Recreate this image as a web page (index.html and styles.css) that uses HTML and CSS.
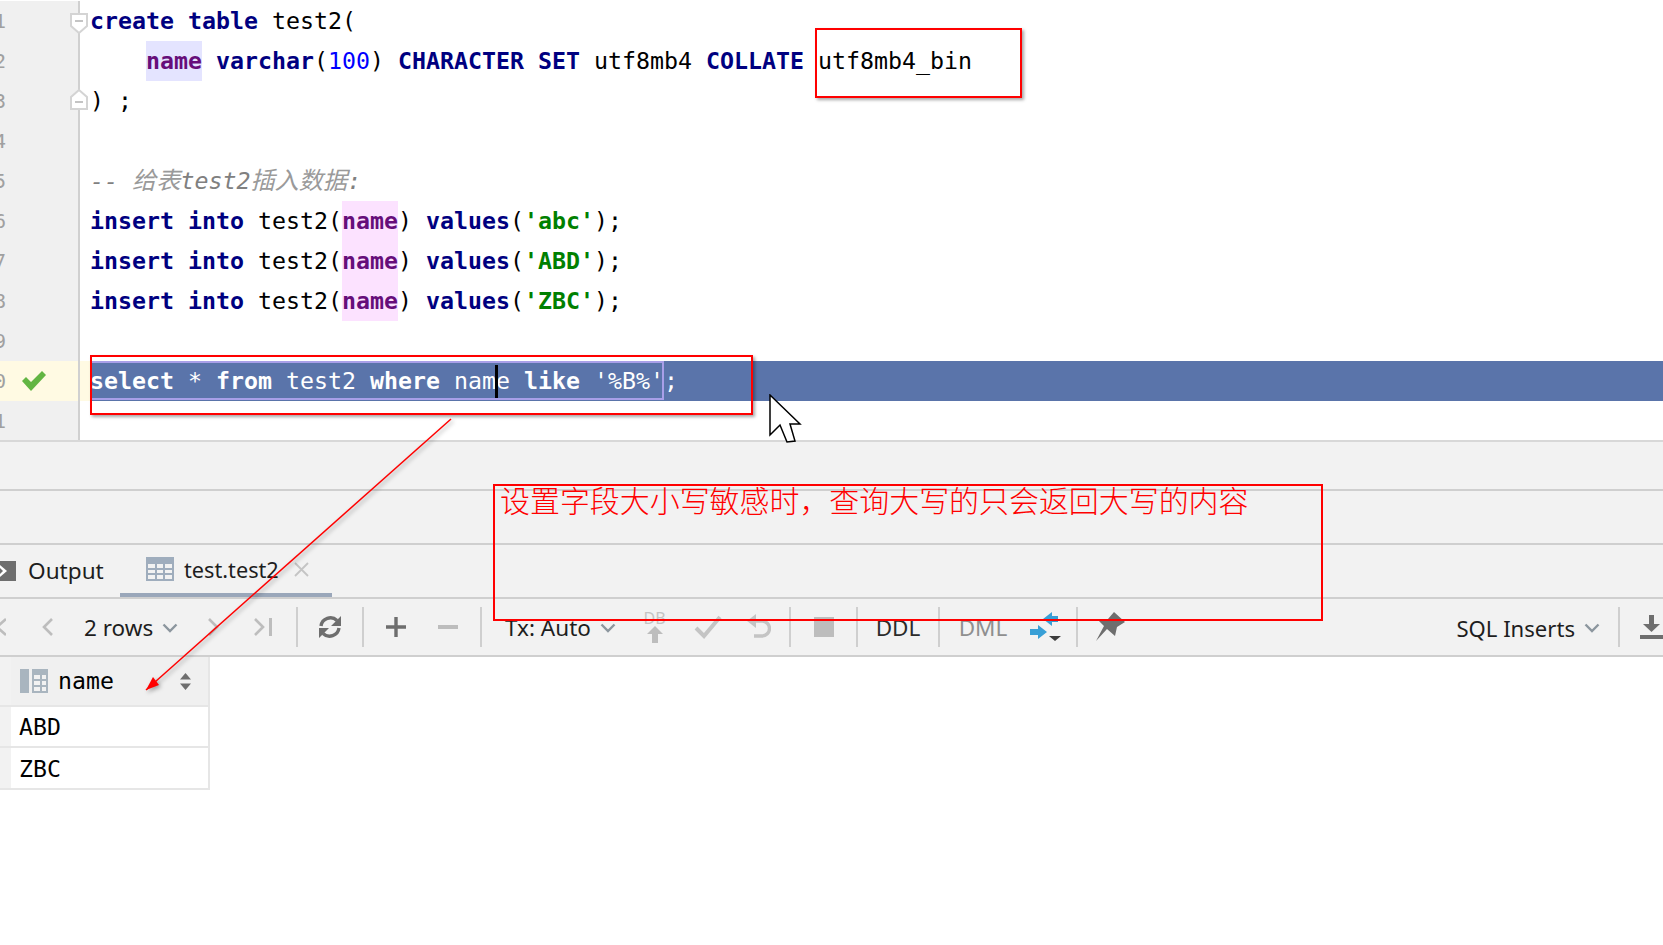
FILE: index.html
```html
<!DOCTYPE html>
<html lang="zh">
<head>
<meta charset="utf-8">
<title>test2</title>
<link rel="stylesheet" href="styles.css">
</head>
<body>
<div class="canvas">
  <section class="editor">
    <div class="line"><div class="gutter"><span class="num">1</span><svg class="fold" width="18" height="21" viewBox="0 0 18 21"><path d="M1 1H17V13L9 20L1 13Z" fill="#fff" stroke="#d4d4d4" stroke-width="2"/><path d="M5 8H13" stroke="#c4c4c4" stroke-width="2"/></svg></div><div class="code"><b>create table</b> test2(</div></div>
    <div class="line"><div class="gutter"><span class="num">2</span></div><div class="code">    <b class="ident hl-blue">name</b> <b>varchar</b>(<span class="n">100</span>) <b>CHARACTER SET</b> utf8mb4 <b>COLLATE</b> utf8mb4_bin</div></div>
    <div class="line"><div class="gutter"><span class="num">3</span><svg class="fold fold-end" width="18" height="21" viewBox="0 0 18 21"><path d="M1 20H17V8L9 1L1 8Z" fill="#fff" stroke="#d4d4d4" stroke-width="2"/><path d="M5 13H13" stroke="#c4c4c4" stroke-width="2"/></svg></div><div class="code">) ;</div></div>
    <div class="line"><div class="gutter"><span class="num">4</span></div><div class="code"></div></div>
    <div class="line"><div class="gutter"><span class="num">5</span></div><div class="code"><i class="c">-- <span class="cjk">给表</span>test2<span class="cjk">插入数据</span>:</i></div></div>
    <div class="line"><div class="gutter"><span class="num">6</span></div><div class="code"><b>insert into</b> test2(<b class="ident hl-pink">name</b>) <b>values</b>(<b class="s">'abc'</b>);</div></div>
    <div class="line"><div class="gutter"><span class="num">7</span></div><div class="code"><b>insert into</b> test2(<b class="ident hl-pink">name</b>) <b>values</b>(<b class="s">'ABD'</b>);</div></div>
    <div class="line"><div class="gutter"><span class="num">8</span></div><div class="code"><b>insert into</b> test2(<b class="ident hl-pink">name</b>) <b>values</b>(<b class="s">'ZBC'</b>);</div></div>
    <div class="line"><div class="gutter"><span class="num">9</span></div><div class="code"></div></div>
    <div class="line current"><div class="gutter"><span class="num">0</span><svg class="check" width="26" height="20" viewBox="0 0 26 20"><path d="M1 10L5 6L10 11L21 0L25 4L10 20Z" fill="#62b543"/></svg></div><div class="code"><span class="stmt"><b>select</b> * <b>from</b> test2 <b>where</b> name <b>like</b> '%B%'<span class="caret"></span></span>;</div></div>
    <div class="line"><div class="gutter"><span class="num">1</span></div><div class="code"></div></div>
  </section>

  <div class="gap"></div>
  <div class="gap"></div>

  <nav class="tabs">
    <div class="tab tab-output">
      <svg width="16" height="20" viewBox="0 0 16 20"><rect width="16" height="20" fill="#6e6e6e"/><path d="M0 4L7 10L0 16Z" fill="#fff"/><path d="M0 7L3 10L0 13Z" fill="#6e6e6e"/></svg>
      <span>Output</span>
    </div>
    <div class="tab tab-active">
      <svg width="28" height="24" viewBox="0 0 28 24"><rect width="28" height="24" fill="#9fadbd"/><path d="M2 7H26V22H2Z" fill="#f2f2f2"/><path d="M2 12H26M2 17H26M10 7V22M18 7V22" stroke="#9fadbd" stroke-width="2"/></svg>
      <span>test.test2</span>
      <svg class="close" width="15" height="15" viewBox="0 0 15 15"><path d="M1 1L14 14M14 1L1 14" stroke="#c4c4c4" stroke-width="1.800"/></svg>
    </div>
  </nav>

  <div class="toolbar">
    <div class="slot start"><svg width="6" height="18" viewBox="0 0 6 18"><path d="M6 1L-3 9L6 17" fill="none" stroke="#bdbdbd" stroke-width="2.600"/></svg></div>
    <div class="slot"><svg width="13" height="20" viewBox="0 0 13 20"><path d="M11 2L3 10L11 18" fill="none" stroke="#bdbdbd" stroke-width="2.600"/></svg></div>
    <div class="slot label rows"><span>2 rows</span><svg class="chev" width="16" height="10" viewBox="0 0 16 10"><path d="M1.500 1.500L8 8L14.500 1.500" fill="none" stroke="#8c969e" stroke-width="2.400"/></svg></div>
    <div class="slot"><svg width="13" height="20" viewBox="0 0 13 20"><path d="M2 2L10 10L2 18" fill="none" stroke="#bdbdbd" stroke-width="2.600"/></svg></div>
    <div class="slot"><svg width="20" height="20" viewBox="0 0 20 20"><path d="M2 2L10 10L2 18" fill="none" stroke="#bdbdbd" stroke-width="2.600"/><path d="M17.500 1V19" stroke="#bdbdbd" stroke-width="3"/></svg></div>
    <div class="sep"></div>
    <div class="slot"><svg width="26" height="26" viewBox="0 0 26 26"><path d="M4 12A9.500 9.500 0 0 1 20 6.500M22 14A9.500 9.500 0 0 1 6 19.500" fill="none" stroke="#6e6e6e" stroke-width="3.400"/><path d="M24 2V12H14ZM2 24V14H12Z" fill="#6e6e6e"/></svg></div>
    <div class="sep"></div>
    <div class="slot"><svg width="20" height="20" viewBox="0 0 20 20"><path d="M10 0V20M0 10H20" stroke="#6e6e6e" stroke-width="3.400"/></svg></div>
    <div class="slot"><svg width="20" height="4" viewBox="0 0 20 4"><rect width="20" height="4" fill="#bdbdbd"/></svg></div>
    <div class="sep"></div>
    <div class="slot label tx"><span>Tx: Auto</span><svg class="chev" width="16" height="10" viewBox="0 0 16 10"><path d="M1.500 1.500L8 8L14.500 1.500" fill="none" stroke="#8c969e" stroke-width="2.400"/></svg></div>
    <div class="slot db"><span class="db-text">DB</span><svg width="16" height="17" viewBox="0 0 16 17"><path d="M8 0L16 8H11V17H5V8H0Z" fill="#bdbdbd"/></svg></div>
    <div class="slot"><svg width="28" height="24" viewBox="0 0 28 24"><path d="M2 13L10 21L26 2" fill="none" stroke="#c4c4c4" stroke-width="4"/></svg></div>
    <div class="slot"><svg width="26" height="26" viewBox="0 0 26 26"><path d="M5 7H17A7 7 0 0 1 17 22H9" fill="none" stroke="#c4c4c4" stroke-width="3.400"/><path d="M11 0V14L2 7Z" fill="#c4c4c4"/></svg></div>
    <div class="sep"></div>
    <div class="slot"><svg width="20" height="20" viewBox="0 0 20 20"><rect width="20" height="20" fill="#bdbdbd"/></svg></div>
    <div class="sep"></div>
    <div class="slot text">DDL</div>
    <div class="sep"></div>
    <div class="slot text muted">DML</div>
    <div class="slot"><svg width="32" height="30" viewBox="0 0 32 30"><path d="M14 7L23 0V4H29V10H23V14Z" fill="#389fd6"/><path d="M18 20L9 27V23H1V17H9V13Z" fill="#389fd6"/><path d="M20 24H32L26 29Z" fill="#3c3c3c"/></svg></div>
    <div class="sep"></div>
    <div class="slot"><svg width="30" height="30" viewBox="0 0 30 30"><path d="M19 0L30 10L22 15L20 24L12 17L1 29L9 14L3 8L13 7Z" fill="#6e6e6e"/></svg></div>
    <div class="slot label sql"><span>SQL Inserts</span><svg class="chev" width="16" height="10" viewBox="0 0 16 10"><path d="M1.500 1.500L8 8L14.500 1.500" fill="none" stroke="#8c969e" stroke-width="2.400"/></svg></div>
    <div class="sep"></div>
    <div class="slot end"><svg width="23" height="24" viewBox="0 0 23 24"><path d="M9 0H14V9H20L11.500 17L3 9H9Z" fill="#6e6e6e"/><rect y="20" width="23" height="4" fill="#6e6e6e"/></svg></div>
  </div>

  <section class="grid">
    <div class="grid-row head">
      <div class="rownum"></div>
      <div class="cell">
        <svg width="28" height="24" viewBox="0 0 28 24"><rect width="9" height="24" fill="#a9b5bf"/><path d="M12 0H28V24H12Z" fill="#a9b5bf"/><path d="M14 6H20V10H14ZM22 6H26V10H22ZM14 12H20V16H14ZM22 12H26V16H22ZM14 18H20V22H14ZM22 18H26V22H22Z" fill="#f2f2f2"/></svg>
        <span class="col-name">name</span>
        <svg class="sort" width="11" height="17" viewBox="0 0 11 17"><path d="M5.500 0L11 6.500H0ZM5.500 17L0 10.500H11Z" fill="#6e6e6e"/></svg>
      </div>
    </div>
    <div class="grid-row"><div class="rownum"></div><div class="cell">ABD</div></div>
    <div class="grid-row"><div class="rownum"></div><div class="cell">ZBC</div></div>
  </section>

  <div class="note note-bin"></div>
  <div class="note note-stmt"></div>
  <div class="note note-main">设置字段大小写敏感时，查询大写的只会返回大写的内容</div>
  <svg class="arrow" width="320" height="285" viewBox="0 0 320 285">
    <path d="M311 4L6 275" stroke="#f00" stroke-width="1.500"/>
    <path d="M6 275L13 262L19 270Z" fill="#f00"/>
  </svg>
  <svg class="pointer" width="34" height="50" viewBox="0 0 34 50"><path d="M1 1L31 30H21L26 47L18 48L11 31L1 41Z" fill="#fff" stroke="#000" stroke-width="1.500"/></svg>
</div>
</body>
</html>
```

FILE: styles.css
```css
* { box-sizing: border-box; }
html, body { margin: 0; padding: 0; background: #fff; }
.canvas {
  position: relative;
  width: 1663px;
  height: 945px;
  overflow: hidden;
  font-family: "Noto Sans", "Noto Sans CJK SC", sans-serif;
  color: #1e1e1e;
}

/* editor */
.editor {
  padding-top: 1px;
  height: 440px;
  overflow: hidden;
  font-family: "DejaVu Sans Mono", "Noto Sans CJK SC", monospace;
  font-size: 23.25px;
}
.line { display: flex; height: 40px; }
.gutter {
  position: relative;
  flex: 0 0 80px;
  background: #f0f0f0;
  border-right: 2px solid #d0d0d0;
}
.num {
  display: flex;
  justify-content: flex-end;
  width: 6px;
  overflow: hidden;
  line-height: 40px;
  font-size: 20px;
  color: #a0a0a0;
}
.fold { position: absolute; left: 70px; top: 12px; }
.fold-end { top: 8px; }
.check { position: absolute; left: 21px; top: 10px; }
.code {
  flex: 1;
  padding-left: 10px;
  line-height: 40px;
  white-space: pre;
  color: #000;
}
.code b { color: #000080; font-weight: 700; }
.code b.ident { color: #660e7a; display: inline-block; }
.hl-blue { background: #e4e4ff; }
.hl-pink { background: #fce2ff; }
.code .n { color: #0000ff; }
.code b.s { color: #008000; }
.c { color: #808080; font-style: italic; }
.cjk { font-size: 24.2px; color: #9a9a9a; }

.current { background: #fffae3; }
.current .gutter { background: #fffae3; }
.current .code { margin-left: 10px; padding-left: 0; background: #5a74aa; color: #fff; }
.current .code b { color: #fff; }
.stmt {
  position: relative;
  display: inline-block;
  height: 39px;
  outline: 2px solid #a89fe8;
  outline-offset: -2px;
}
.caret {
  position: absolute;
  left: 405px;
  top: 4px;
  width: 3px;
  height: 33px;
  background: #000;
}

/* empty strip panels */
.gap {
  height: 49px;
  background: #f2f2f2;
  border-top: 2px solid #d8d8d8;
}
.gap + .gap { height: 54px; border-top-color: #cfcfcf; }

/* tabs */
.tabs {
  display: flex;
  height: 54px;
  background: #f2f2f2;
  border-top: 2px solid #cfcfcf;
  font-size: 22.6px;
}
.tab { display: flex; align-items: center; height: 52px; }
.tab-output { width: 120px; gap: 12px; }
.tab-output span { margin-top: -2px; }
.tab-active {
  width: 212px;
  padding-left: 26px;
  gap: 10px;
  font-size: 21.7px;
  border-bottom: 4px solid #9aa7ba;
}
.tab-active span { margin-top: 1px; }
.close { margin-left: 5px; }

/* toolbar */
.toolbar {
  display: grid;
  grid-template-columns: 30px 34px 126px 46px 54px 14px 52px 14px 52px 52px 14px 137px 59px 48px 51px 14px 53px 14px 68px 14px 74px 50px 14px 52px 1fr 14px 37px;
  align-items: center;
  height: 60px;
  background: #f2f2f2;
  border-top: 2px solid #cfcfcf;
  border-bottom: 2px solid #cfcfcf;
  font-size: 22.5px;
}
.slot { display: flex; align-items: center; justify-content: center; }
.start { justify-content: flex-start; }
.end { justify-content: flex-end; }
.label { gap: 9px; padding-top: 1px; }
.rows { justify-content: flex-start; padding-left: 20px; }
.tx { justify-content: flex-start; padding-left: 17px; }
.sql { justify-content: flex-end; padding-right: 12px; font-size: 22.1px; }
.text { color: #2b2b2b; padding-top: 1px; }
.muted { color: #8f8f8f; }
.db { flex-direction: column; }
.db-text { font-size: 16px; line-height: 15px; color: #c4c4c4; }
.sep { justify-self: center; width: 2px; height: 40px; background: #cfcfcf; }

/* result grid */
.grid { font-family: "DejaVu Sans Mono", monospace; font-size: 23.2px; }
.grid-row { display: flex; height: 41px; }
.grid-row:last-child { height: 42px; }
.rownum {
  flex: 0 0 11px;
  background: #f2f2f2;
  border-bottom: 2px solid #e6e6e6;
}
.cell {
  display: flex;
  align-items: center;
  width: 199px;
  padding-left: 8px;
  border-right: 2px solid #e6e6e6;
  border-bottom: 2px solid #e6e6e6;
  color: #000;
}
.head { height: 50px; }
.head .cell { background: #f0f0f0; padding-left: 9px; }
.head .col-name { margin-left: 10px; margin-top: -2px; }
.sort { margin-left: auto; margin-right: 17px; }

/* annotations on top of the picture */
.note { position: absolute; border: 2px solid #f00; }
.note-bin { left: 815px; top: 28px; width: 207px; height: 70px; box-shadow: 2px 2px 3px rgba(0, 0, 0, .35); }
.note-stmt { left: 90px; top: 355px; width: 663px; height: 60px; box-shadow: 2px 2px 3px rgba(0, 0, 0, .35); }
.note-main {
  left: 493px;
  top: 484px;
  width: 830px;
  height: 137px;
  padding-left: 5px;
  font-family: "Noto Sans CJK SC", sans-serif;
  font-weight: 300;
  font-size: 29.95px;
  line-height: 27px;
  color: #f00;
}
.arrow { position: absolute; left: 140px; top: 415px; filter: drop-shadow(2px 2px 2px rgba(0, 0, 0, .35)); }
.pointer { position: absolute; left: 769px; top: 394px; }
```
